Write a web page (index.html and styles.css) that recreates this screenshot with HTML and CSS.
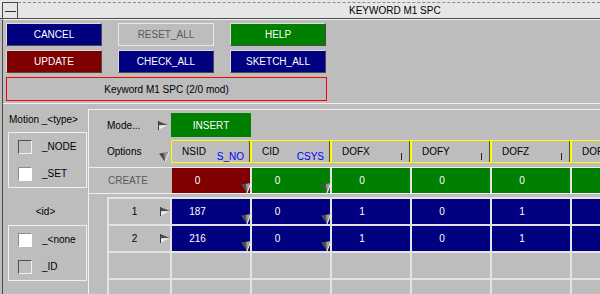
FILE: index.html
```html
<!DOCTYPE html>
<html>
<head>
<meta charset="utf-8">
<link rel="stylesheet" href="styles.css">
</head>
<body>
<div class="titlebar">
  <div class="sysbox"><span class="dash"></span></div>
  <div class="title">KEYWORD M1 SPC</div>
</div>
<div class="main">
  <div class="top">
    <div class="btns">
      <div class="btn navy">CANCEL</div>
      <div class="btn dis">RESET_ALL</div>
      <div class="btn green">HELP</div>
      <div class="btn maroon">UPDATE</div>
      <div class="btn navy">CHECK_ALL</div>
      <div class="btn navy">SKETCH_ALL</div>
    </div>
    <div class="status">Keyword M1 SPC (2/0 mod)</div>
  </div>
  <div class="body">
    <div class="side">
      <div class="side-title">Motion _&lt;type&gt;</div>
      <div class="group">
        <div class="opt"><span class="chk"></span><span class="optlab">_NODE</span></div>
        <div class="opt"><span class="chk on"></span><span class="optlab">_SET</span></div>
      </div>
      <div class="side-title center gap">&lt;id&gt;</div>
      <div class="group g2">
        <div class="opt"><span class="chk on"></span><span class="optlab">_&lt;none</span></div>
        <div class="opt"><span class="chk"></span><span class="optlab">_ID</span></div>
      </div>
    </div>
    <div class="panel">
      <div class="row-mode">
        <div class="lab"><span>Mode...</span>
          <svg class="flag" width="10" height="9" viewBox="0 0 10 9"><polygon points="0,0 10,4 0,4.5" fill="#4e4e4e"/><polygon points="0,4.5 10,4 0,9" fill="#ececec"/><line x1="0.5" y1="0" x2="0.5" y2="9" stroke="#3a3a3a"/></svg>
        </div>
        <div class="btn green insert">INSERT</div>
      </div>
      <div class="row-head">
        <div class="lab"><span>Options</span>
          <svg class="optarrow" width="10" height="10" viewBox="0 0 10 10"><polygon points="0,1.5 10,0 6,10" fill="#4e4e4e"/><polygon points="5,1 10,0 6,10" fill="#9a9a9a"/><polyline points="10,0 6,10" stroke="#f4f4f4" fill="none"/></svg>
        </div>
        <div class="hcell"><span>NSID</span><span class="sub">S_NO</span></div>
        <div class="hcell"><span>CID</span><span class="sub">CSYS</span></div>
        <div class="hcell"><span>DOFX</span><span class="tick"></span></div>
        <div class="hcell"><span>DOFY</span><span class="tick"></span></div>
        <div class="hcell"><span>DOFZ</span><span class="tick"></span></div>
        <div class="hcell"><span>DOF</span><span class="tick"></span></div>
      </div>
      <div class="row-create">
        <div class="lab create">CREATE</div>
        <div class="cells">
          <div class="cell maroon id">0<svg class="dd" width="10" height="10" viewBox="0 0 10 10"><polygon points="0,1.5 10,0 6,10" fill="#4e4e4e"/><polygon points="5,1 10,0 6,10" fill="#9a9a9a"/><polyline points="10,0 6,10" stroke="#f4f4f4" fill="none"/></svg></div>
          <div class="cell green id">0<svg class="dd" width="10" height="10" viewBox="0 0 10 10"><polygon points="0,1.5 10,0 6,10" fill="#4e4e4e"/><polygon points="5,1 10,0 6,10" fill="#9a9a9a"/><polyline points="10,0 6,10" stroke="#f4f4f4" fill="none"/></svg></div>
          <div class="cell green">0</div>
          <div class="cell green">0</div>
          <div class="cell green">0</div>
          <div class="cell green"></div>
        </div>
      </div>
      <div class="grid">
        <div class="num"><span>1</span><svg width="10" height="9" viewBox="0 0 10 9"><polygon points="0,0 10,4 0,4.5" fill="#4e4e4e"/><polygon points="0,4.5 10,4 0,9" fill="#ececec"/><line x1="0.5" y1="0" x2="0.5" y2="9" stroke="#3a3a3a"/></svg></div>
        <div class="cell navy id">187<svg class="dd" width="10" height="10" viewBox="0 0 10 10"><polygon points="0,1.5 10,0 6,10" fill="#4e4e4e"/><polygon points="5,1 10,0 6,10" fill="#9a9a9a"/><polyline points="10,0 6,10" stroke="#f4f4f4" fill="none"/></svg></div>
        <div class="cell navy id">0<svg class="dd" width="10" height="10" viewBox="0 0 10 10"><polygon points="0,1.5 10,0 6,10" fill="#4e4e4e"/><polygon points="5,1 10,0 6,10" fill="#9a9a9a"/><polyline points="10,0 6,10" stroke="#f4f4f4" fill="none"/></svg></div>
        <div class="cell navy">1</div>
        <div class="cell navy">0</div>
        <div class="cell navy">1</div>
        <div class="cell navy"></div>

        <div class="num"><span>2</span><svg width="10" height="9" viewBox="0 0 10 9"><polygon points="0,0 10,4 0,4.5" fill="#4e4e4e"/><polygon points="0,4.5 10,4 0,9" fill="#ececec"/><line x1="0.5" y1="0" x2="0.5" y2="9" stroke="#3a3a3a"/></svg></div>
        <div class="cell navy id">216<svg class="dd" width="10" height="10" viewBox="0 0 10 10"><polygon points="0,1.5 10,0 6,10" fill="#4e4e4e"/><polygon points="5,1 10,0 6,10" fill="#9a9a9a"/><polyline points="10,0 6,10" stroke="#f4f4f4" fill="none"/></svg></div>
        <div class="cell navy id">0<svg class="dd" width="10" height="10" viewBox="0 0 10 10"><polygon points="0,1.5 10,0 6,10" fill="#4e4e4e"/><polygon points="5,1 10,0 6,10" fill="#9a9a9a"/><polyline points="10,0 6,10" stroke="#f4f4f4" fill="none"/></svg></div>
        <div class="cell navy">1</div>
        <div class="cell navy">0</div>
        <div class="cell navy">1</div>
        <div class="cell navy"></div>

        <div class="num"></div>
        <div class="cell"></div><div class="cell"></div><div class="cell"></div><div class="cell"></div><div class="cell"></div><div class="cell"></div>
        <div class="num"></div>
        <div class="cell"></div><div class="cell"></div><div class="cell"></div><div class="cell"></div><div class="cell"></div><div class="cell"></div>
      </div>
    </div>
  </div>
</div>
</body>
</html>
```

FILE: styles.css
```css
* { box-sizing: border-box; }
html, body { margin: 0; padding: 0; }
body {
  width: 600px;
  height: 294px;
  overflow: hidden;
  background: #bdbdbd;
  font-family: "Liberation Sans", Arial, sans-serif;
  font-size: 10px;
  color: #000;
}

/* title bar */
.titlebar {
  display: flex;
  height: 19px;
  padding-top: 2px;
  background: #e6e6e6;
  border-bottom: 1px solid #4a4a4a;
}
.sysbox {
  margin-left: 2px;
  width: 16px;
  height: 16px;
  border-top: 1px solid #4a4a4a;
  border-left: 1px solid #4a4a4a;
  border-right: 1px solid #4a4a4a;
  display: flex;
  align-items: center;
  justify-content: center;
}
.dash {
  display: block;
  width: 11px;
  height: 1px;
  background: #333;
  margin-top: 1px;
}
.title {
  flex: 1;
  height: 16px;
  border-top: 1px dashed #8a8a8a;
  line-height: 16px;
  padding-left: 331px;
  white-space: nowrap;
}

/* main */
.main {
  margin-left: 2px;
  border-left: 1px solid #4a4a4a;
  border-top: 1px solid #f2f2f2;
  height: 275px;
  overflow: hidden;
}
.top {
  padding: 3px 0 2px 3px;
  border-bottom: 1px solid #f0f0f0;
}
.btns {
  display: grid;
  grid-template-columns: repeat(3, 96px);
  grid-auto-rows: 23px;
  column-gap: 16px;
  row-gap: 4px;
}
.btn {
  display: flex;
  align-items: center;
  justify-content: center;
  color: #fff;
  border: 1px solid;
  border-color: #dcdcdc #4a4a4a #4a4a4a #dcdcdc;
  white-space: nowrap;
}
.navy { background: #000080; color: #fff; }
.green { background: #008000; color: #fff; }
.maroon { background: #800000; color: #fff; }
.btn.dis { background: #bdbdbd; color: #5a5a5a; border-color: #e8e8e8; }
.status {
  margin-top: 4px;
  width: 321px;
  height: 24px;
  border: 1px solid #ff0000;
  display: flex;
  align-items: center;
  justify-content: center;
}

.body {
  display: flex;
}

/* left side */
.side {
  width: 85px;
  flex-shrink: 0;
  padding-top: 9px;
}
.side-title {
  line-height: 14px;
  height: 14px;
  padding-left: 6px;
  white-space: nowrap;
}
.side-title.center { text-align: center; padding-left: 0; }
.side-title.gap { margin-top: 17px; }
.group {
  margin: 5px 0 0 5px;
  width: 79px;
  border: 1px solid #f0f0f0;
}
.group.g2 { margin-top: 6px; }
.opt {
  height: 27px;
  display: flex;
  align-items: center;
  padding-left: 9px;
}
.chk {
  width: 14px;
  height: 14px;
  border: 1px solid;
  border-color: #505050 #f0f0f0 #f0f0f0 #505050;
  background: #bdbdbd;
}
.chk.on {
  background: #fff;
  border-color: #8c8c8c #fff #fff #8c8c8c;
}
.optlab { margin-left: 10px; }

/* right panel */
.panel {
  flex: 1;
  margin-top: 5px;
  border-top: 1px solid #f0f0f0;
  border-left: 1px solid #f0f0f0;
  overflow: hidden;
  height: 200px;
}
.lab {
  width: 82px;
  flex-shrink: 0;
  display: flex;
  align-items: center;
  padding-left: 18px;
  white-space: nowrap;
}
.lab svg { margin-left: auto; }
.row-mode {
  display: flex;
  align-items: center;
  height: 30px;
}
.flag { margin-right: 3px; }
.insert {
  width: 80px;
  height: 24px;
  flex-shrink: 0;
  border: none;
}
.row-head {
  display: flex;
  height: 23px;
  margin-bottom: 4px;
}
.optarrow { align-self: flex-end; margin-bottom: 1px; margin-right: 2px; }
.hcell {
  width: 80px;
  flex-shrink: 0;
  border: 1px solid #ffff00;
  box-shadow: inset -1px 0 0 #4a4a4a;
  display: flex;
  align-items: center;
  padding-left: 10px;
  white-space: nowrap;
}
.sub {
  margin-left: auto;
  margin-right: 6px;
  align-self: flex-end;
  line-height: 11px;
  color: #0000ff;
}
.tick {
  margin-left: auto;
  margin-right: 8px;
  margin-bottom: 2px;
  align-self: flex-end;
  width: 1px;
  height: 7px;
  background: #222;
}
.row-create {
  display: flex;
  border-top: 1px solid #f0f0f0;
  border-bottom: 1px solid #f0f0f0;
  height: 27px;
}
.lab.create {
  width: 83px;
  padding-left: 19px;
  color: #5a5a5a;
}
.cells {
  display: grid;
  grid-template-columns: repeat(6, 78px);
  column-gap: 2px;
  background: #e4e4e4;
  flex-shrink: 0;
}
.cell {
  position: relative;
  display: flex;
  align-items: center;
  justify-content: center;
  padding-right: 18px;
  color: #fff;
  background: #bdbdbd;
}
.cell.navy { background: #000080; }
.cell.green { background: #008000; }
.cell.maroon { background: #800000; }
.cell.id { padding-right: 27px; }
.dd {
  position: absolute;
  right: -1px;
  bottom: 0;
}
.grid {
  margin: 3px 0 0 18px;
  display: grid;
  grid-template-columns: 61px repeat(6, 78px);
  grid-auto-rows: 25px;
  gap: 2px;
  padding: 2px 0 0 2px;
  background: #e4e4e4;
  width: 560px;
}
.num {
  background: #bdbdbd;
  display: flex;
  align-items: center;
}
.num span { flex: 1; text-align: center; }
```
